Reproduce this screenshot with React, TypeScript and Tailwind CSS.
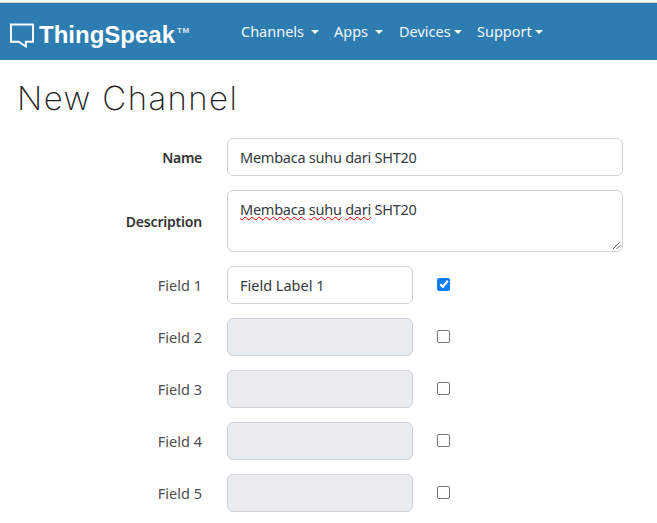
import React from "react";

const body = "font-['Noto_Sans','Open_Sans',sans-serif]";

function NavItem({ label, gap = true, width }: { label: string; gap?: boolean; width: string }) {
  return (
    <div className={`flex items-center text-[14.5px] text-[#f2f7fb] ${width}`}>
      <span>{label}</span>
      <span className={gap ? "ml-[7px] flex" : "ml-[3px] flex"}>
        <span className="inline-block h-0 w-0 border-x-[4px] border-t-[4px] border-x-transparent border-t-white" />
      </span>
    </div>
  );
}

function Row({ label, value, disabled, checked }: { label: string; value?: string; disabled?: boolean; checked?: boolean }) {
  return (
    <div className="flex h-[38px] items-center">
      <div className="w-[202px] pt-[1px] text-right text-[14.5px] text-[#4d4d4d]">{label}</div>
      <div className={`ml-[25px] flex h-[38px] w-[186px] items-center rounded-[6px] border border-[#ced4da] px-3 pt-[1px] text-[14.5px] text-[#343a40] ${disabled ? "bg-[#e9ecef]" : "bg-white"}`}>
        {value}
      </div>
      <div className="ml-[24px] -mt-[2px] flex h-[13px] w-[13px] items-center justify-center">
        {checked ? (
          <div className="flex h-[13px] w-[13px] items-center justify-center rounded-[2px] bg-[#0a7cff]">
            <svg viewBox="0 0 12 12" className="h-[12px] w-[12px]">
              <path d="M2.3 6.2 L4.9 8.8 L9.8 2.8" fill="none" stroke="#fff" strokeWidth="2.2" />
            </svg>
          </div>
        ) : (
          <div className="h-[13px] w-[13px] rounded-[2px] border border-[#767676] bg-white" />
        )}
      </div>
    </div>
  );
}

const squiggle = "underline decoration-[#f00000] decoration-wavy decoration-[1px] underline-offset-[1px]";

export default function App() {
  return (
    <div className={`h-[523px] w-[657px] overflow-hidden bg-white ${body}`}>
      <div className="h-[3px] border-b border-[#d4d4d4] bg-white" />
      <nav className="flex h-[57px] items-center bg-[#2e7db2]">
        <div className="mt-[8px] ml-[10px] flex w-[231px] items-center">
          <svg viewBox="0 0 25 26" className="h-[26px] w-[24px]">
            <path d="M1 1 H24 V19 H16.5 V24 L9 19 H1 Z" fill="none" stroke="#fff" strokeWidth="2" />
          </svg>
          <span className="-mt-[2px] ml-[5px] font-['Liberation_Sans',sans-serif] text-[24px] leading-none font-bold text-white">ThingSpeak</span>
          <span className="-mt-[10px] ml-[2px] font-['Liberation_Sans',sans-serif] text-[8px] leading-none font-bold tracking-[0.5px] text-[#dbe8f1]">TM</span>
        </div>
        <NavItem label="Channels" width="w-[93px]" />
        <NavItem label="Apps" width="w-[65px]" />
        <NavItem label="Devices" gap={false} width="w-[78px]" />
        <NavItem label="Support" gap={false} width="w-auto" />
      </nav>
      <h1 className="mt-[15px] ml-[17px] font-['Inter',sans-serif] text-[33px] leading-[46px] font-extralight tracking-[1.4px] text-[#222]">New Channel</h1>
      <form className="mt-[17px] flex flex-col gap-[14px]">
        <div className="flex h-[38px] items-center">
          <div className="w-[202px] pt-[1px] text-right text-[14px] font-semibold tracking-[-0.3px] text-[#333]">Name</div>
          <div className="ml-[25px] flex h-[38px] w-[396px] items-center rounded-[6px] border border-[#ced4da] px-3 pt-[1px] text-[14.5px] tracking-[-0.25px] text-[#343a40]">Membaca suhu dari SHT20</div>
        </div>
        <div className="flex h-[62px] items-center">
          <div className="w-[202px] pt-[1px] text-right text-[14px] font-semibold tracking-[-0.2px] text-[#333]">Description</div>
          <div className="relative ml-[25px] h-[62px] w-[396px] rounded-[6px] border border-[#ced4da] px-3 pt-[8px] text-[14.5px] tracking-[-0.25px] text-[#343a40]">
            <span className={squiggle}>Membaca</span> <span className={squiggle}>suhu</span> <span className={squiggle}>dari</span> SHT20
            <svg viewBox="0 0 10 10" className="absolute right-[1px] bottom-[1px] h-[9px] w-[9px]">
              <path d="M1 9 L9 1 M5 9 L9 5" stroke="#555" strokeWidth="1" />
            </svg>
          </div>
        </div>
        <Row label="Field 1" value="Field Label 1" checked />
        <Row label="Field 2" disabled />
        <Row label="Field 3" disabled />
        <Row label="Field 4" disabled />
        <Row label="Field 5" disabled />
      </form>
    </div>
  );
}
